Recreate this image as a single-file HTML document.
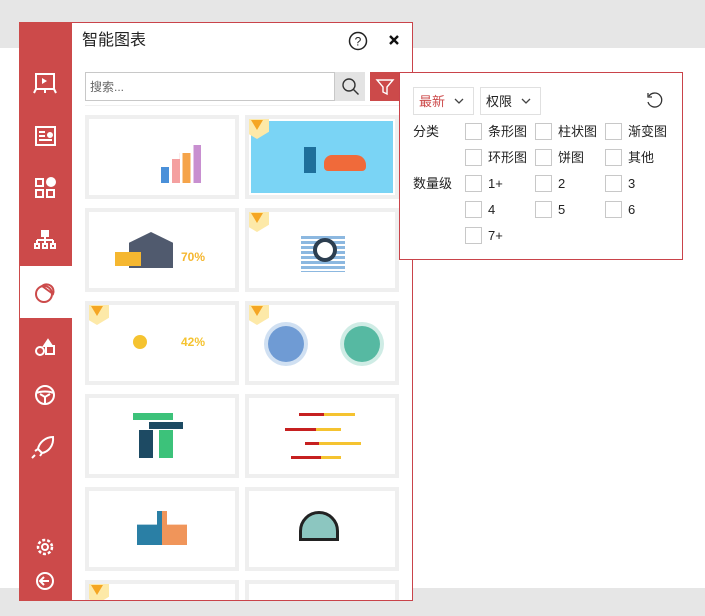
<!DOCTYPE html><html><head><meta charset="utf-8"><style>
*{margin:0;padding:0;box-sizing:border-box}
body{width:705px;height:616px;position:relative;background:#fff;font-family:"Liberation Sans","Noto Sans CJK SC",sans-serif;overflow:hidden}
.a{position:absolute}
.card{position:absolute;width:154px;height:84px;border:4px solid #efefef;background:#fff;overflow:hidden}
.badge{position:absolute;left:-4px;top:-4px;width:24px;height:24px;background:#fde9a8;clip-path:polygon(0 0,100% 0,100% 70%,50% 100%,0 70%)}
.badge:after{content:"";position:absolute;left:6px;top:5px;width:12px;height:10px;background:#f5a623;clip-path:polygon(0 0,100% 0,50% 100%)}
.cb{position:absolute;width:17px;height:17px;border:1px solid #c8c8c8;background:#fff}
.t{position:absolute;font-size:13px;color:#222;line-height:1}
</style></head><body>
<div class="a" style="left:0;top:0;width:705px;height:48px;background:#e6e6e6"></div>
<div class="a" style="left:0;top:588px;width:705px;height:28px;background:#e6e6e6"></div>
<div class="a" style="left:19px;top:22px;width:394px;height:579px;border:1px solid #c9434a;background:#fff"></div>
<div class="a" style="left:19px;top:22px;width:53px;height:579px;background:#cc4a4a"></div>
<div class="a" style="left:20px;top:266px;width:52px;height:52px;background:#fff"></div>
<svg class="a" style="left:19px;top:22px" width="53" height="579" fill="none" stroke="#fff" stroke-width="2">
<rect x="17" y="52" width="18" height="15"/><path d="M17 67l-2 4M35 67l2 4M26 67v4"/><path d="M23 56l5 3-5 3z" fill="#fff" stroke="none"/>
<rect x="17" y="105" width="19" height="18"/><path d="M20 110h6M20 114h6M20 118h13"/><circle cx="31" cy="113" r="2" fill="#fff"/>
<rect x="17" y="157" width="7" height="7"/><circle cx="32" cy="160" r="4" fill="#fff"/><rect x="17" y="168" width="7" height="7"/><rect x="28" y="168" width="7" height="7"/>
<rect x="23" y="209" width="6" height="5" fill="#fff"/><path d="M26 214v4M18 218h16M18 218v4M26 218v4M34 218v4"/><rect x="16" y="222" width="4" height="4"/><rect x="24" y="222" width="4" height="4"/><rect x="32" y="222" width="4" height="4"/>
<g stroke="#cc4a4a"><circle cx="25" cy="272" r="8"/><path d="M23 264a7 7 0 0 1 11 8z"/></g>
<path d="M29 318l4 6h-8z" fill="#fff"/><circle cx="21" cy="329" r="4"/><rect x="27" y="324" width="8" height="8"/>
<circle cx="26" cy="373" r="9"/><path d="M18 371c3-2 13-2 16 0M26 375v7M21 372l5 3 5-3"/>
<path d="M34 415c-8 0-14 6-15 12l4 4c6-1 12-7 11-16zM19 427l-3 2M23 431l-2 3M16 433l-3 3"/>
<circle cx="26" cy="525" r="3"/><circle cx="26" cy="525" r="7" stroke-dasharray="3 2" stroke-width="2.5"/>
<circle cx="26" cy="559" r="8"/><path d="M30 559h-8M25 555l-4 4 4 4"/>
</svg>
<div class="t" style="left:82px;top:33px;font-size:16px">智能图表</div>
<svg class="a" style="left:348px;top:31px" width="20" height="20" fill="none" stroke="#222" stroke-width="1.5"><circle cx="10" cy="10" r="8.5"/><text x="10" y="14.5" font-size="12" text-anchor="middle" fill="#222" stroke="none" font-family="Liberation Sans">?</text></svg>
<svg class="a" style="left:388px;top:34px" width="12" height="12" stroke="#111" stroke-width="2.4"><path d="M2 2l8 8M10 2l-8 8"/></svg>
<div class="a" style="left:85px;top:72px;width:250px;height:29px;border:1px solid #c8c8c8"></div>
<div class="t" style="left:90px;top:81px;font-size:12px;color:#666">搜索...</div>
<div class="a" style="left:335px;top:72px;width:30px;height:29px;background:#e3e3e3"></div>
<svg class="a" style="left:341px;top:77px" width="20" height="20" fill="none" stroke="#333" stroke-width="1.4"><circle cx="8" cy="8" r="6"/><path d="M12.5 12.5l5 5"/></svg>
<div class="a" style="left:370px;top:72px;width:29px;height:29px;background:#cc4a4a"></div>
<svg class="a" style="left:375px;top:77px" width="20" height="20" fill="none" stroke="#fff" stroke-width="1.4"><path d="M2 3h16l-6 7v7l-4-2v-5z"/></svg>
<div class="a" style="left:85px;top:105px;width:314px;height:1px;background:#f0f0f0"></div>

<div class="card" style="left:85px;top:115px"><div class="a" style="left:72px;top:24px;width:40px;height:40px;background:linear-gradient(90deg,#4a90d9 0 20%,#fff 20% 27%,#f4a0a0 27% 47%,#fff 47% 54%,#f5a44a 54% 74%,#fff 74% 81%,#c88fd0 81%);clip-path:polygon(0 60%,20% 60%,20% 40%,47% 40%,47% 25%,74% 25%,74% 5%,100% 5%,100% 100%,0 100%)"></div></div>
<div class="card" style="left:245px;top:115px"><div class="a" style="left:2px;top:2px;width:142px;height:72px;background:#7ad4f5"></div><div class="a" style="left:55px;top:28px;width:12px;height:26px;background:#1e6f9a"></div><div class="a" style="left:75px;top:36px;width:42px;height:16px;background:#f06a3a;border-radius:8px 10px 4px 4px"></div><div class="badge"></div></div>
<div class="card" style="left:85px;top:208px"><div class="a" style="left:40px;top:20px;width:44px;height:36px;background:#505a6e;clip-path:polygon(0 30%,50% 0,100% 30%,100% 100%,0 100%)"></div><div class="a" style="left:26px;top:40px;width:26px;height:14px;background:#f5b730"></div><div class="a" style="left:92px;top:38px;font-size:12px;font-weight:bold;color:#f5b730">70%</div></div>
<div class="card" style="left:245px;top:208px"><div class="a" style="left:52px;top:24px;width:44px;height:36px;background:repeating-linear-gradient(#8cb8e0 0 3px,#fff 3px 5px)"></div><div class="a" style="left:64px;top:26px;width:24px;height:24px;border-radius:50%;background:#fff;border:4px solid #2c3e50"></div><div class="badge"></div></div>
<div class="card" style="left:85px;top:301px"><div class="a" style="left:44px;top:30px;width:14px;height:14px;border-radius:50%;background:#f5c330"></div><div class="a" style="left:92px;top:30px;font-size:12px;font-weight:bold;color:#f5c330">42%</div><div class="badge"></div></div>
<div class="card" style="left:245px;top:301px"><div class="a" style="left:19px;top:21px;width:36px;height:36px;border-radius:50%;background:#6f9bd4;box-shadow:0 0 0 4px #d0e0f2"></div><div class="a" style="left:95px;top:21px;width:36px;height:36px;border-radius:50%;background:#56b9a2;box-shadow:0 0 0 4px #cfece5"></div><div class="badge"></div></div>
<div class="card" style="left:85px;top:394px"><div class="a" style="left:44px;top:15px;width:40px;height:7px;background:#3cc27a"></div><div class="a" style="left:60px;top:24px;width:34px;height:7px;background:#1d4a63"></div><div class="a" style="left:50px;top:32px;width:14px;height:28px;background:#1d4a63"></div><div class="a" style="left:70px;top:32px;width:14px;height:28px;background:#3cc27a"></div></div>
<div class="card" style="left:245px;top:394px"><div class="a" style="left:50px;top:15px;width:56px;height:3px;background:linear-gradient(90deg,#c62020 45%,#f5c330 45%)"></div><div class="a" style="left:36px;top:30px;width:56px;height:3px;background:linear-gradient(90deg,#c62020 55%,#f5c330 55%)"></div><div class="a" style="left:56px;top:44px;width:56px;height:3px;background:linear-gradient(90deg,#c62020 25%,#f5c330 25%)"></div><div class="a" style="left:42px;top:58px;width:50px;height:3px;background:linear-gradient(90deg,#c62020 60%,#f5c330 60%)"></div></div>
<div class="card" style="left:85px;top:487px"><div class="a" style="left:48px;top:20px;width:50px;height:34px;background:linear-gradient(90deg,#2a7fa5 50%,#f0955a 50%);clip-path:polygon(0 40%,40% 40%,40% 0,60% 0,60% 40%,100% 40%,100% 100%,0 100%)"></div></div>
<div class="card" style="left:245px;top:487px"><div class="a" style="left:50px;top:20px;width:40px;height:30px;border-radius:20px 20px 0 0;border:3px solid #222;background:#8cc6c0"></div></div>
<div class="card" style="left:85px;top:580px;height:20px;border-bottom:0"><div class="badge"></div></div>
<div class="card" style="left:245px;top:580px;height:20px;border-bottom:0"></div>

<div class="a" style="left:399px;top:72px;width:284px;height:188px;border:1px solid #c9434a;background:#fff"></div>
<div class="a" style="left:413px;top:87px;width:61px;height:28px;border:1px solid #e0e0e0"></div>
<div class="t" style="left:419px;top:95px;color:#cc4a4a">最新</div>
<div class="a" style="left:480px;top:87px;width:61px;height:28px;border:1px solid #e0e0e0"></div>
<div class="t" style="left:486px;top:95px">权限</div>
<svg class="a" style="left:454px;top:97px" width="100" height="10" fill="none" stroke="#444" stroke-width="1.3"><path d="M1 2l4 4 4-4M68 2l4 4 4-4"/></svg>
<svg class="a" style="left:645px;top:91px" width="20" height="20" fill="none" stroke="#333" stroke-width="1.3"><path d="M4 5a7 7 0 1 1-1 6"/><path d="M3 2v4h4"/></svg>
<div class="t" style="left:413px;top:125px">分类</div>
<div class="t" style="left:413px;top:177px">数量级</div>
<div class="cb" style="left:465px;top:123px"></div><div class="t" style="left:488px;top:125px">条形图</div>
<div class="cb" style="left:535px;top:123px"></div><div class="t" style="left:558px;top:125px">柱状图</div>
<div class="cb" style="left:605px;top:123px"></div><div class="t" style="left:628px;top:125px">渐变图</div>
<div class="cb" style="left:465px;top:149px"></div><div class="t" style="left:488px;top:151px">环形图</div>
<div class="cb" style="left:535px;top:149px"></div><div class="t" style="left:558px;top:151px">饼图</div>
<div class="cb" style="left:605px;top:149px"></div><div class="t" style="left:628px;top:151px">其他</div>
<div class="cb" style="left:465px;top:175px"></div><div class="t" style="left:488px;top:177px">1+</div>
<div class="cb" style="left:535px;top:175px"></div><div class="t" style="left:558px;top:177px">2</div>
<div class="cb" style="left:605px;top:175px"></div><div class="t" style="left:628px;top:177px">3</div>
<div class="cb" style="left:465px;top:201px"></div><div class="t" style="left:488px;top:203px">4</div>
<div class="cb" style="left:535px;top:201px"></div><div class="t" style="left:558px;top:203px">5</div>
<div class="cb" style="left:605px;top:201px"></div><div class="t" style="left:628px;top:203px">6</div>
<div class="cb" style="left:465px;top:227px"></div><div class="t" style="left:488px;top:229px">7+</div>
</body></html>
